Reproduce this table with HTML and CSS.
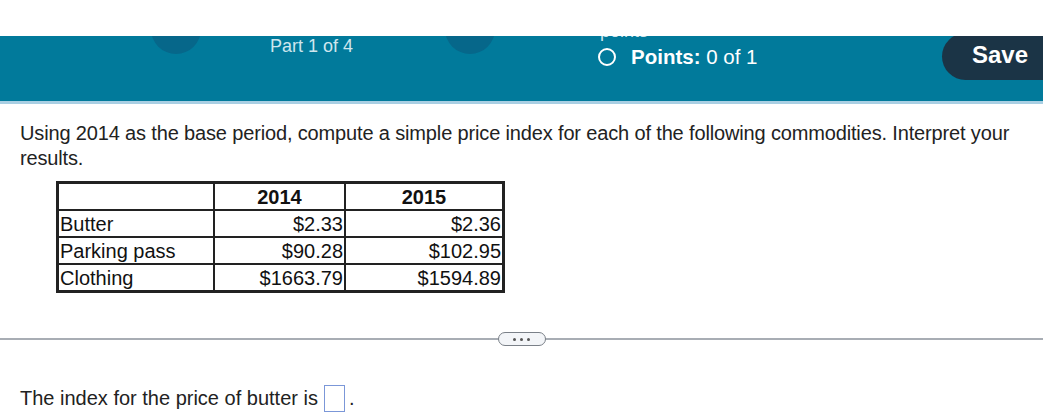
FILE: index.html
```html
<!DOCTYPE html>
<html>
<head>
<meta charset="utf-8">
<link rel="stylesheet" href="styles.css">
</head>
<body>
<header class="top">
  <div class="band">
    <span class="knob knob-a"></span>
    <span class="knob knob-b"></span>
    <span class="part">Part 1 of 4</span>
    <span class="ghost">points</span>
    <div class="points"><span class="radio"></span><b>Points:</b>&nbsp;0 of 1</div>
    <button class="save">Save</button>
  </div>
  <div class="rule"></div>
</header>
<main class="content">
  <p class="question">Using 2014 as the base period, compute a simple price index for each of the following commodities. Interpret your results.</p>
  <table class="data">
    <tr><th class="c1"></th><th class="c2">2014</th><th class="c3">2015</th></tr>
    <tr><td>Butter</td><td class="num">$2.33</td><td class="num">$2.36</td></tr>
    <tr><td>Parking pass</td><td class="num">$90.28</td><td class="num">$102.95</td></tr>
    <tr><td>Clothing</td><td class="num">$1663.79</td><td class="num">$1594.89</td></tr>
  </table>
  <div class="divider"><span class="more"><i></i><i></i><i></i></span></div>
  <p class="answer">The index for the price of butter is <span class="box"></span>.</p>
</main>
</body>
</html>
```
FILE: styles.css
```css
* { box-sizing: border-box; }
body {
  margin: 0;
  font-family: "Liberation Sans", Arial, sans-serif;
  color: #222;
  background: #fff;
  width: 1043px;
  height: 416px;
  overflow: hidden;
}
.top { padding-top: 36px; }
.band {
  position: relative;
  height: 65px;
  background: #017a9b;
  overflow: hidden;
}
.rule { height: 3px; background: #a9cfe3; }
.knob {
  position: absolute;
  top: -32px;
  width: 50px;
  height: 50px;
  border-radius: 50%;
  background: #06678a;
}
.knob-a { left: 151px; }
.knob-b { left: 445px; }
.part {
  position: absolute;
  left: 270px;
  top: 1px;
  font-size: 18px;
  line-height: 18px;
  color: #cfe6ee;
}
.ghost {
  position: absolute;
  left: 600px;
  top: -14px;
  font-size: 18px;
  line-height: 18px;
  color: #cfe6ee;
}
.points {
  position: absolute;
  left: 598px;
  top: 9px;
  display: flex;
  align-items: center;
  font-size: 20.5px;
  color: #fff;
}
.points b { font-weight: bold; }
.radio {
  width: 18px;
  height: 18px;
  border: 2.5px solid #fff;
  border-radius: 50%;
  margin-right: 15px;
}
.save {
  position: absolute;
  left: 942px;
  top: -3px;
  width: 130px;
  height: 47px;
  border: none;
  border-radius: 24px;
  background: #1b3446;
  color: #fff;
  font-family: "Liberation Sans", Arial, sans-serif;
  font-weight: bold;
  font-size: 24px;
  line-height: 24px;
  text-align: left;
  padding: 0 0 4px 30px;
}
.content { padding: 0 18px 0 20px; }
.question {
  margin: 17px 0 0;
  font-size: 20px;
  line-height: 25px;
  color: #222;
  letter-spacing: -0.15px;
}
.data {
  margin: 10px 0 0 36px;
  border-collapse: separate;
  border-spacing: 0;
  border: 2px solid #222;
  font-size: 20px;
  color: #111;
}
.data th, .data td {
  border: 1px solid #222;
  height: 27px;
  padding: 0 1px;
  line-height: 20px;
}
.data th { font-weight: bold; text-align: center; }
.c1 { width: 156px; }
.c2 { width: 131px; }
.c3 { width: 158px; }
.num { text-align: right; }
.divider {
  margin: 45px -18px 0 -20px;
  height: 2px;
  background: #a8adb4;
  display: flex;
  justify-content: center;
  align-items: center;
}
.more {
  width: 48px;
  height: 14px;
  border: 1.5px solid #7a8088;
  border-radius: 7px;
  background: #f3f5f8;
  display: flex;
  justify-content: center;
  align-items: center;
  gap: 4px;
}
.more i {
  width: 3px;
  height: 3px;
  border-radius: 50%;
  background: #555;
}
.answer {
  margin: 45px 0 0;
  font-size: 20px;
  display: flex;
  align-items: center;
}
.box {
  display: inline-block;
  width: 21px;
  height: 27px;
  border: 1.5px solid #7b97d8;
  margin: 0 4px 0 6px;
}
```
